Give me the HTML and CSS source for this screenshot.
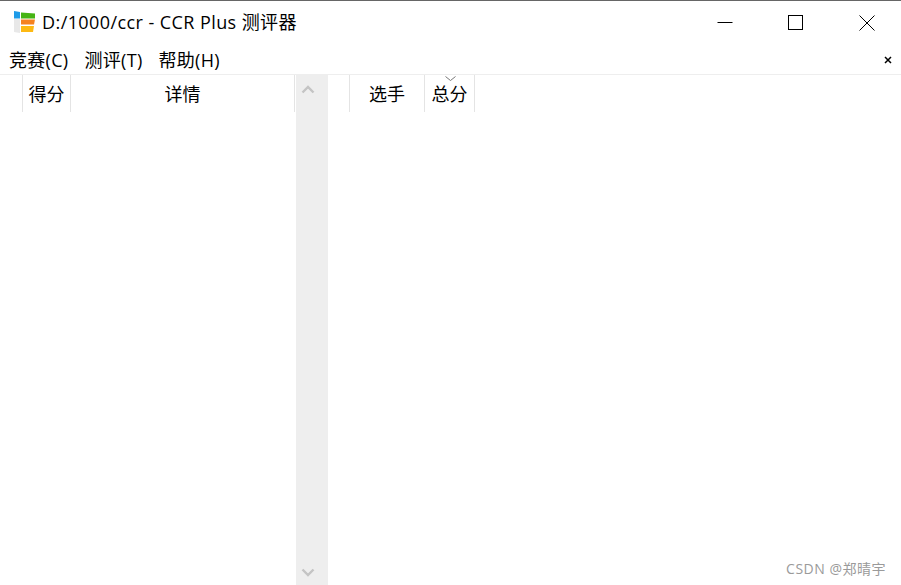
FILE: index.html
```html
<!DOCTYPE html>
<html lang="zh-CN">
<head>
    <meta charset="UTF-8">
    <title>D:/1000/ccr - CCR Plus 测评器</title>
    <link rel="stylesheet" href="styles.css">
</head>
<body>
    <header class="titlebar">
        <svg class="app-icon" width="22" height="24" viewBox="0 0 22 24">
            <path fill="#e8e8e8" d="M1 8h6v14l-6 -1z"/>
            <path fill="#1e9be8" d="M1 0l6 1v6.500h-6z"/>
            <path fill="#46b414" d="M8 1.500l14 1v5h-14z"/>
            <path fill="#f58220" d="M8 8.500h14l-1 5h-13z"/>
            <path fill="#fdb913" d="M8 15h13l-1 6h-12z"/>
        </svg>
        <span class="title-text">D:/1000/ccr - CCR Plus 测评器</span>
        <div class="window-buttons">
            <button class="win-btn">
                <svg width="16" height="16" viewBox="0 0 16 16"><path d="M0.500 7.500h15" stroke="#000" fill="none"/></svg>
            </button>
            <button class="win-btn">
                <svg width="16" height="16" viewBox="0 0 16 16"><rect x="0.500" y="0.500" width="14" height="14" stroke="#000" fill="none"/></svg>
            </button>
            <button class="win-btn">
                <svg width="16" height="16" viewBox="0 0 16 16"><path d="M0.500 0.500l15 15M15.500 0.500l-15 15" stroke="#000" fill="none"/></svg>
            </button>
        </div>
    </header>

    <nav class="menubar">
        <a class="menu-item">竞赛(C)</a>
        <a class="menu-item">测评(T)</a>
        <a class="menu-item">帮助(H)</a>
        <svg class="dock-close" width="8" height="8" viewBox="0 0 8 8"><path d="M1 1l6 6M7 1l-6 6" stroke="#000" stroke-width="1.500" fill="none"/></svg>
    </nav>

    <main class="panes">
        <section class="pane pane-left">
            <div class="table-head">
                <div class="col col-gutter-left"></div>
                <div class="col col-score">得分</div>
                <div class="col col-detail">详情</div>
            </div>
        </section>
        <div class="scrollbar">
            <svg width="14" height="9" viewBox="0 0 14 9"><path d="M1.500 7.500l5.500 -5.500 5.500 5.500" stroke="#c4c4c4" stroke-width="2.400" fill="none"/></svg>
            <svg width="14" height="9" viewBox="0 0 14 9"><path d="M1.500 1.500l5.500 5.500 5.500 -5.500" stroke="#c4c4c4" stroke-width="2.400" fill="none"/></svg>
        </div>
        <section class="pane pane-right">
            <div class="table-head">
                <div class="col col-gutter-right"></div>
                <div class="col col-player">选手</div>
                <div class="col col-total">
                    <svg class="sort-arrow" width="11" height="5" viewBox="0 0 11 5"><path d="M0.500 0.500l5 4 5 -4" stroke="#777" fill="none"/></svg>
                    总分
                </div>
            </div>
        </section>
    </main>

    <div class="watermark">CSDN @郑晴宇</div>
</body>
</html>
```

FILE: styles.css
```css
/* General Styling */
html, body {
    height: 100%;
}

body {
    margin: 0;
    display: flex;
    flex-direction: column;
    overflow: hidden;
    position: relative;
    background-color: #fff;
    color: #000;
    font-family: "Open Sans", "Noto Sans CJK SC", sans-serif;
    border-top: 1px solid #666;
    box-sizing: border-box;
}

/* Title bar */
.titlebar {
    display: flex;
    align-items: center;
    height: 44px;
    flex: none;
    padding-left: 13px;
}

.app-icon {
    flex: none;
    margin-right: 7px;
}

.title-text {
    font-size: 18px;
    letter-spacing: 0.42px;
    white-space: nowrap;
    margin-top: -4px;
}

.window-buttons {
    display: flex;
    margin-left: auto;
    margin-right: -1px;
}

.win-btn {
    width: 71px;
    height: 44px;
    padding: 0;
    border: none;
    background: none;
    display: flex;
    align-items: center;
    justify-content: center;
}

/* Menu */
.menubar {
    display: flex;
    align-items: center;
    gap: 16px;
    height: 27px;
    flex: none;
    padding-left: 9px;
    padding-bottom: 2px;
    border-bottom: 1px solid #eee;
    font-size: 18px;
    position: relative;
}

.menu-item {
    letter-spacing: 0.3px;
}

.dock-close {
    position: absolute;
    right: 9px;
    top: 11px;
}

/* Panes */
.panes {
    display: flex;
    flex: 1;
    min-height: 0;
}

.pane-left {
    width: 296px;
    flex: none;
}

.pane-right {
    flex: 1;
}

.table-head {
    display: flex;
    height: 37px;
    font-size: 18px;
}

.col {
    display: flex;
    align-items: center;
    justify-content: center;
    box-sizing: border-box;
    border-right: 1px solid #e4e4e4;
    position: relative;
    padding-bottom: 2px;
}

.col-gutter-left {
    width: 23px;
}

.col-score {
    width: 48px;
}

.col-detail {
    width: 224px;
}

.col-gutter-right {
    width: 22px;
}

.col-player {
    width: 75px;
}

.col-total {
    width: 50px;
}

.sort-arrow {
    position: absolute;
    top: 1px;
    left: 20px;
}

.scrollbar {
    width: 32px;
    flex: none;
    background-color: #eee;
    display: flex;
    flex-direction: column;
    align-items: center;
    justify-content: space-between;
    padding: 10px 8px 8px 0;
    box-sizing: border-box;
}

.watermark {
    position: absolute;
    right: 15px;
    bottom: 7px;
    font-size: 14px;
    letter-spacing: 0.5px;
    color: #9a9a9a;
}
```
